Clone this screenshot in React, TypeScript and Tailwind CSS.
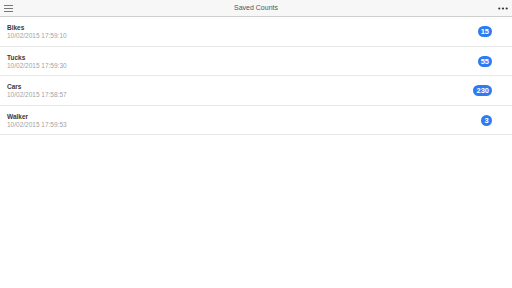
const counts = [
  { name: "Bikes", date: "10/02/2015 17:59:10", count: 15 },
  { name: "Tucks", date: "10/02/2015 17:59:30", count: 55 },
  { name: "Cars", date: "10/02/2015 17:58:57", count: 230 },
  { name: "Walker", date: "10/02/2015 17:59:53", count: 3 },
];

export default function App() {
  return (
    <div className="w-[512px] h-[288px] bg-white font-['Liberation_Sans',Arial,sans-serif]">
      {/* Top bar */}
      <div className="h-[17px] grid grid-cols-[1fr_auto_1fr] items-center px-[4px] bg-[#f7f7f7] border-b border-[#cfcfcf]">
        <svg width="9" height="7" viewBox="0 0 9 7" className="text-[#777]">
          <rect x="0" y="0" width="9" height="1" fill="currentColor" />
          <rect x="0" y="3" width="9" height="1" fill="currentColor" />
          <rect x="0" y="6" width="9" height="1" fill="currentColor" />
        </svg>
        <span className="text-[7px] text-[#555]">Saved Counts</span>
        <svg width="10" height="3" viewBox="0 0 10 3" className="text-[#333] justify-self-end">
          <circle cx="1.3" cy="1.5" r="1.1" fill="currentColor" />
          <circle cx="5" cy="1.5" r="1.1" fill="currentColor" />
          <circle cx="8.7" cy="1.5" r="1.1" fill="currentColor" />
        </svg>
      </div>

      {/* List */}
      <div className="flex flex-col">
        {counts.map((c) => (
          <div
            key={c.name}
            className="h-[29.5px] flex items-center justify-between pl-[7px] pr-[20px] border-b border-[#e8e8e8]"
          >
            <div className="flex flex-col leading-[8px] pt-[2px]">
              <span className="text-[6.5px] font-bold text-[#3a3a3a]">{c.name}</span>
              <span className="text-[6.5px] text-[#a3a3a3]">{c.date}</span>
            </div>
            <span className="min-w-[11px] h-[11px] mt-[1px] px-[3px] rounded-full bg-[#2d7cf2] text-white text-[7.5px] font-bold flex items-center justify-center">
              {c.count}
            </span>
          </div>
        ))}
      </div>
    </div>
  );
}
